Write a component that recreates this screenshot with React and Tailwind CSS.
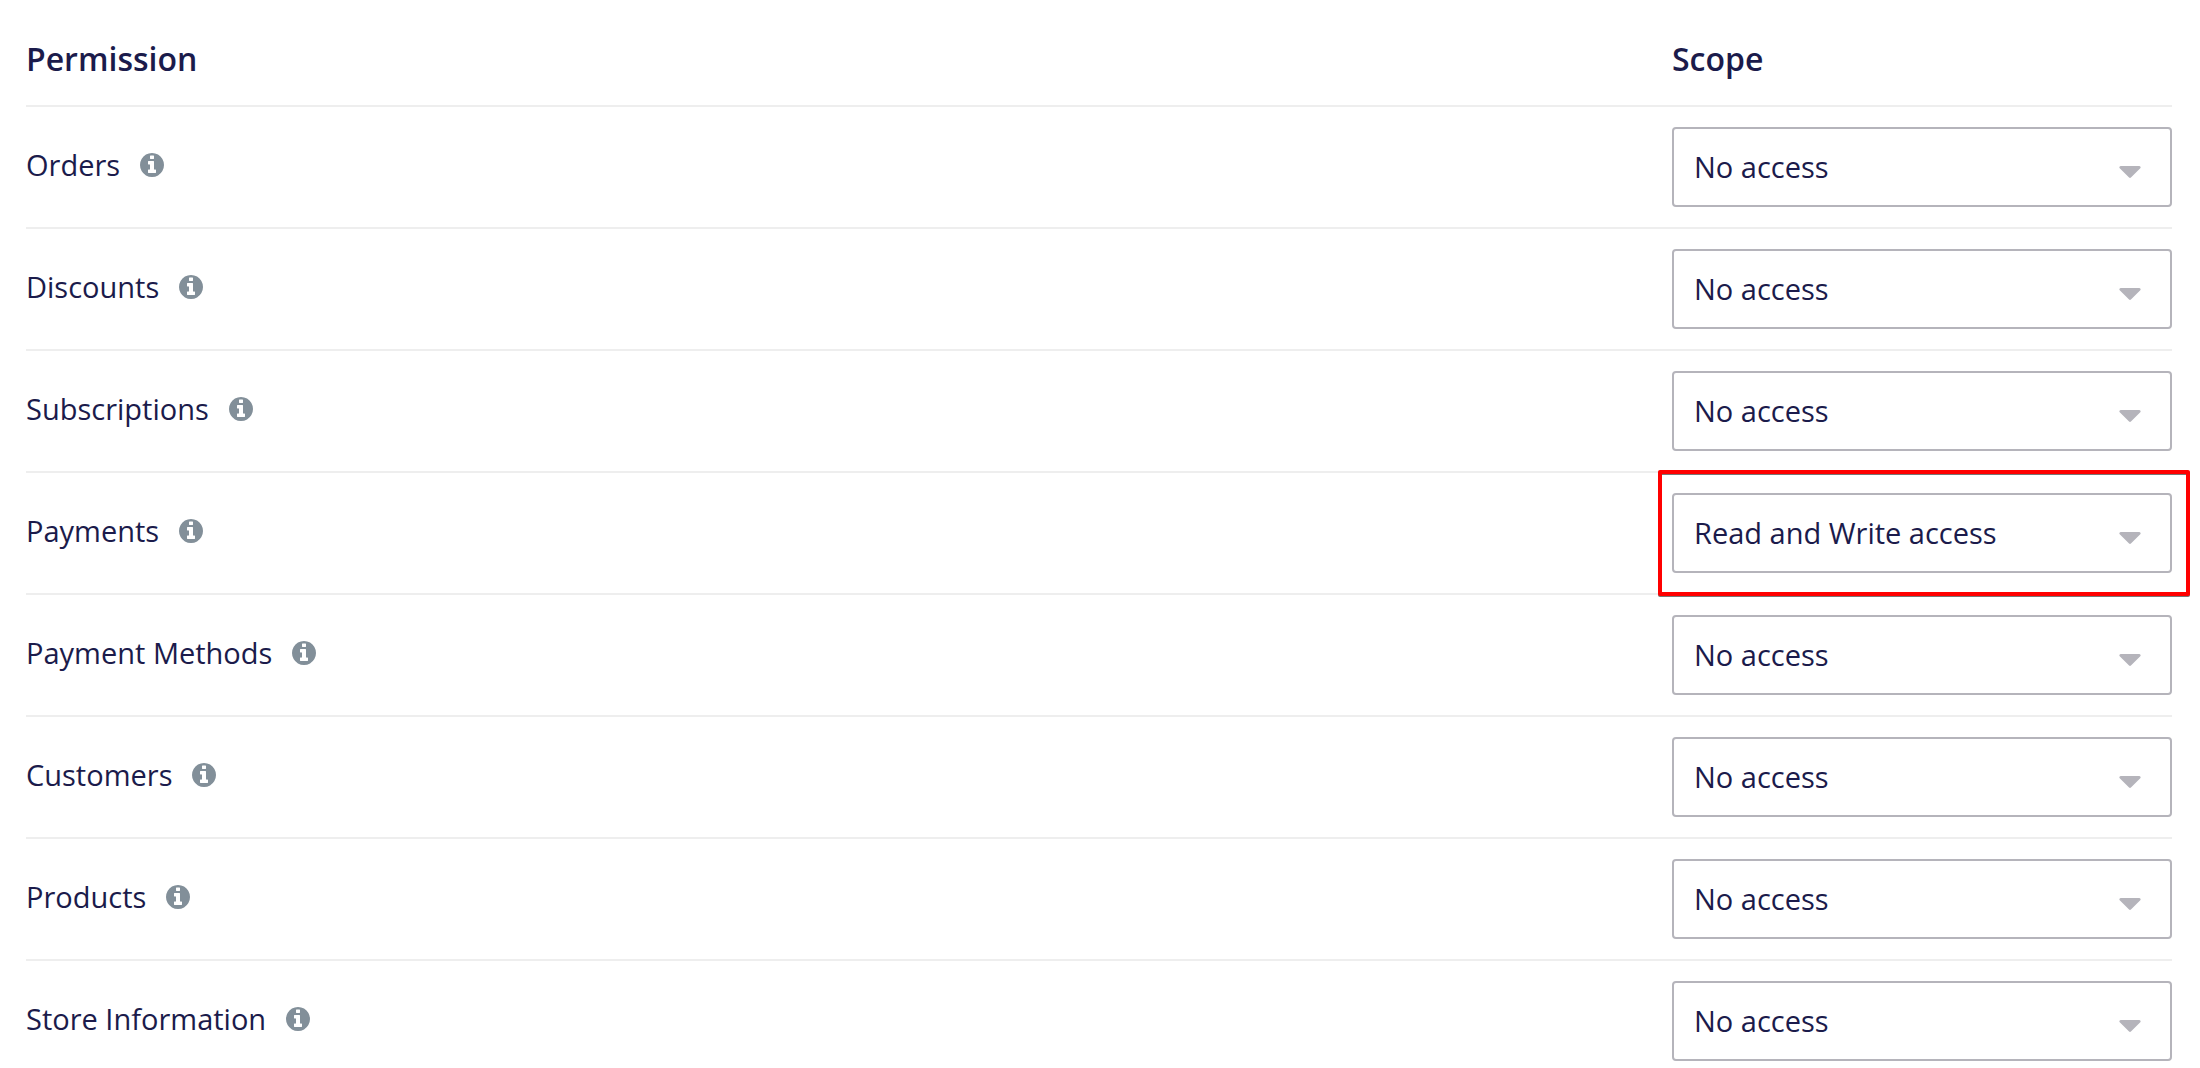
import { useState } from 'react';

const SCOPES = ['No access', 'Read access', 'Read and Write access'];

const PERMISSIONS = [
  { id: 'orders', label: 'Orders', scope: 'No access' },
  { id: 'discounts', label: 'Discounts', scope: 'No access' },
  { id: 'subscriptions', label: 'Subscriptions', scope: 'No access' },
  { id: 'payments', label: 'Payments', scope: 'Read and Write access', highlighted: true },
  { id: 'payment-methods', label: 'Payment Methods', scope: 'No access' },
  { id: 'customers', label: 'Customers', scope: 'No access' },
  { id: 'products', label: 'Products', scope: 'No access' },
  { id: 'store-information', label: 'Store Information', scope: 'No access' },
];

function InfoIcon() {
  return (
    <svg viewBox="0 128 1536 1536" className="size-6 shrink-0 fill-[#828f99]" aria-hidden="true">
      <path d="M1024 1376v-160q0-14-9-23t-23-9h-96v-512q0-14-9-23t-23-9h-320q-14 0-23 9t-9 23v160q0 14 9 23t23 9h96v320h-96q-14 0-23 9t-9 23v160q0 14 9 23t23 9h448q14 0 23-9t9-23zm-128-896v-160q0-14-9-23t-23-9h-192q-14 0-23 9t-9 23v160q0 14 9 23t23 9h192q14 0 23-9t9-23zm640 416q0 209-103 385.5t-279.5 279.5-385.5 103-385.5-103-279.5-279.5-103-385.5 103-385.5 279.5-279.5 385.5-103 385.5 103 279.5 279.5 103 385.5z" />
    </svg>
  );
}

function CaretIcon() {
  return (
    <svg
      viewBox="384 640 1024 576"
      className="pointer-events-none absolute top-[39px] right-[30px] h-3 w-6 fill-[#b5b4bb]"
      aria-hidden="true"
    >
      <path d="M1408 704q0 26-19 45l-448 448q-19 19-45 19t-45-19l-448-448q-19-19-19-45t19-45 45-19h896q26 0 45 19t19 45z" />
    </svg>
  );
}

function PermissionRow({ permission, value, onChange }) {
  const { id, label, highlighted } = permission;

  return (
    <tr className="border-t-2 border-[#eeeeee]">
      <td className="py-5 align-middle">
        <div className="flex items-center gap-5 pb-1">
          <label htmlFor={id}>{label}</label>
          <InfoIcon />
        </div>
      </td>
      <td className="w-[500px] py-5">
        <div className="relative">
          <select
            id={id}
            value={value}
            onChange={e => onChange(id, e.target.value)}
            className="block h-20 w-full appearance-none rounded-[4px] border-2 border-[#b5b4bb] bg-white px-5"
          >
            {SCOPES.map(scope => (
              <option key={scope} value={scope}>{scope}</option>
            ))}
          </select>
          <CaretIcon />
          {highlighted && (
            <div className="pointer-events-none absolute -inset-y-[23px] -right-[18px] -left-[14px] rounded-[2px] border-4 border-[#ff0000] drop-shadow-[0_1px_0_#777777]" />
          )}
        </div>
      </td>
    </tr>
  );
}

function App() {
  const [scopes, setScopes] = useState(
    Object.fromEntries(PERMISSIONS.map(p => [p.id, p.scope]))
  );

  const handleChange = (id, scope) => {
    setScopes(prev => ({ ...prev, [id]: scope }));
  };

  return (
    <div className="min-h-screen bg-white pt-[41px] pr-7 pl-[26px] font-['Open_Sans',sans-serif] text-[29px] leading-9 text-[#1b1b4b]">
      <table className="w-full border-collapse">
        <thead>
          <tr className="text-left text-[32px]">
            <th className="pb-7 font-semibold">Permission</th>
            <th className="pb-7 font-semibold">Scope</th>
          </tr>
        </thead>
        <tbody>
          {PERMISSIONS.map(p => (
            <PermissionRow
              key={p.id}
              permission={p}
              value={scopes[p.id]}
              onChange={handleChange}
            />
          ))}
        </tbody>
      </table>
    </div>
  );
}

export default App;
